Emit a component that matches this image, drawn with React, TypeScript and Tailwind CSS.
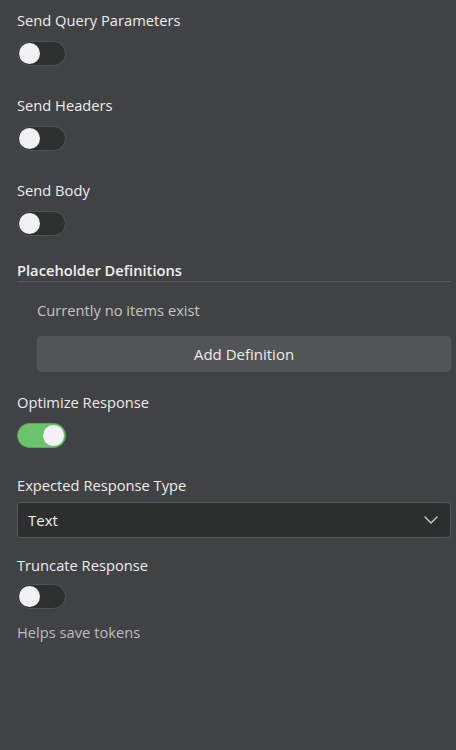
import React from 'react';

const font = { fontFamily: '"Open Sans", "Noto Sans", sans-serif' };

const Toggle: React.FC<{ on?: boolean }> = ({ on = false }) => (
    <div
        className={`w-[49px] h-[25px] rounded-full border flex items-center px-[1px] ${
            on ? 'bg-[#6bc46b] border-[#5aa85a] justify-end' : 'bg-[#2e302f] border-[#525354] justify-start'
        }`}
    >
        <div className="w-[21px] h-[21px] rounded-full bg-[#f1f1f6]" />
    </div>
);

const ToggleField: React.FC<{ label: string; on?: boolean; className?: string }> = ({ label, on, className = '' }) => (
    <div className={className}>
        <div className="text-[14.7px] leading-[20px] text-[#ececec]">{label}</div>
        <div className="mt-[11px]">
            <Toggle on={on} />
        </div>
    </div>
);

export default function App() {
    return (
        <div style={font} className="w-[456px] h-[750px] bg-[#414244] pl-[17px] pr-[5px] pt-[10px]">
            <ToggleField label="Send Query Parameters" />
            <ToggleField label="Send Headers" className="mt-[29px]" />
            <ToggleField label="Send Body" className="mt-[29px]" />

            <div className="mt-[24px] text-[14.7px] leading-[20px] font-semibold text-[#f0f0f0] pb-[1px] border-b border-[#58595b]">
                Placeholder Definitions
            </div>

            <div className="pl-[20px]">
                <div className="mt-[18px] text-[14.7px] leading-[20px] text-[#c4c4c4]">Currently no items exist</div>
                <button className="mt-[16px] w-full h-[36px] rounded-[4px] bg-[#535456] text-[15px] text-[#ececec] flex items-center justify-center">
                    Add Definition
                </button>
            </div>

            <ToggleField label="Optimize Response" on className="mt-[20px]" />

            <div className="mt-[27px] text-[14.7px] leading-[20px] text-[#ececec]">Expected Response Type</div>
            <div className="mt-[7px] h-[36px] rounded-[4px] border border-[#575859] bg-[#2d2f2e] flex items-center justify-between pl-[10px] pr-[12px]">
                <span className="text-[15px] text-[#f0f0f0]">Text</span>
                <svg width="14" height="8" viewBox="0 0 14 8" fill="none">
                    <path d="M1 1l6 6 6-6" stroke="#d0d0d0" strokeWidth="1.4" strokeLinecap="round" strokeLinejoin="round" />
                </svg>
            </div>

            <div className="mt-[17px] text-[14.7px] leading-[20px] text-[#ececec]">Truncate Response</div>
            <div className="mt-[9px]">
                <Toggle />
            </div>
            <div className="mt-[13px] text-[14.7px] leading-[20px] text-[#bdbdbd]">Helps save tokens</div>
        </div>
    );
}
